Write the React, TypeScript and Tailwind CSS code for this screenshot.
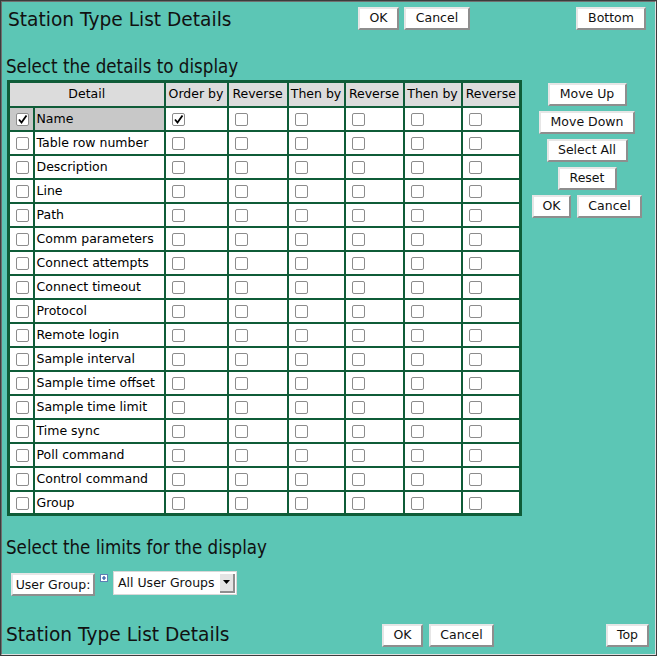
import React from "react";

const details = [
  "Name",
  "Table row number",
  "Description",
  "Line",
  "Path",
  "Comm parameters",
  "Connect attempts",
  "Connect timeout",
  "Protocol",
  "Remote login",
  "Sample interval",
  "Sample time offset",
  "Sample time limit",
  "Time sync",
  "Poll command",
  "Control command",
  "Group",
];

const sortHeads = ["Order by", "Reverse", "Then by", "Reverse", "Then by", "Reverse"];

const Box = ({ checked }: { checked?: boolean }) => (
  <span className="flex items-center justify-center w-[13px] h-[13px] bg-white border border-[#8c8c8c] rounded-[2px]">
    {checked && (
      <svg width="11" height="11" viewBox="0 0 11 11">
        <path d="M2 5.5 L4.5 8.5 L9.5 1.5" fill="none" stroke="#000" strokeWidth="1.8" />
      </svg>
    )}
  </span>
);

const Btn = ({ label, className }: { label: string; className: string }) => (
  <button
    className={
      "flex items-center justify-center h-[23px] bg-white text-[12.5px] text-[#111] border-2 border-t-[#e6e6e6] border-l-[#e6e6e6] border-r-[#8e8e8e] border-b-[#8e8e8e] " +
      className
    }
  >
    {label}
  </button>
);

const cell = "border-2 border-[#0f5c38] p-0 h-[24px]";

export default function App() {
  return (
    <div className="w-[657px] h-[656px] border border-[#3c3c3c] font-['DejaVu_Sans',sans-serif] text-[#111]">
      <div className="h-full bg-[#5cc6b5] border border-t-[#707070] border-l-[#707070] border-r-[#e0e0e0] border-b-[#e0e0e0]">
        {/* Top bar */}
        <div className="flex items-start pt-[5px] h-[29px]">
          <div className="w-[356px] pl-[6px]">
            <h1 className="mt-[2px] text-[18.6px] leading-[22px]">Station Type List Details</h1>
          </div>
          <Btn label="OK" className="w-[41px]" />
          <Btn label="Cancel" className="w-[66px] ml-[5px]" />
          <Btn label="Bottom" className="w-[70px] ml-auto mr-[9px]" />
        </div>

        <h2 className="mt-[25px] pl-[4px] text-[18.6px] leading-[22px] font-['DejaVu_Sans_Condensed','DejaVu_Sans',sans-serif] font-stretch-condensed">
          Select the details to display
        </h2>

        <div className="flex items-start mt-[2px]">
          <table className="ml-[5px] w-[515px] table-fixed border-collapse border-[3px] border-[#0f5c38] text-[12.5px] text-black">
            <colgroup>
              <col className="w-[25px]" />
              <col className="w-[131px]" />
              <col className="w-[63px]" />
              <col className="w-[60px]" />
              <col className="w-[57px]" />
              <col className="w-[59px]" />
              <col className="w-[58px]" />
              <col className="w-[59px]" />
            </colgroup>
            <thead>
              <tr>
                <th colSpan={2} className={cell + " h-[25px] pt-[1px] bg-[#dcdcdc] font-normal text-center"}>
                  Detail
                </th>
                {sortHeads.map((h, i) => (
                  <th key={i} className={cell + " h-[25px] pt-[1px] bg-[#dcdcdc] font-normal text-center whitespace-nowrap"}>
                    {h}
                  </th>
                ))}
              </tr>
            </thead>
            <tbody>
              {details.map((d, r) => (
                <tr key={d}>
                  <td className={cell + " pt-[2px]" + (r === 0 ? " bg-[#c8c8c8]" : " bg-white")}>
                    <div className="flex pl-[6px]">
                      <Box checked={r === 0} />
                    </div>
                  </td>
                  <td className={cell + " pl-[2px] pt-[2px] whitespace-nowrap" + (r === 0 ? " bg-[#c8c8c8]" : " bg-white")}>{d}</td>
                  {sortHeads.map((_, c) => (
                    <td key={c} className={cell + " pt-[2px] bg-white"}>
                      <div className="flex pl-[6px]">
                        <Box checked={r === 0 && c === 0} />
                      </div>
                    </td>
                  ))}
                </tr>
              ))}
            </tbody>
          </table>

          <div className="w-[130px] mt-[3px] flex flex-col items-center gap-[5px]">
            <Btn label="Move Up" className="w-[79px]" />
            <Btn label="Move Down" className="w-[96px]" />
            <Btn label="Select All" className="w-[81px]" />
            <Btn label="Reset" className="w-[59px]" />
            <div className="flex gap-[6px]">
              <Btn label="OK" className="w-[39px]" />
              <Btn label="Cancel" className="w-[65px]" />
            </div>
          </div>
        </div>

        <h2 className="mt-[21px] pl-[4px] text-[18.6px] leading-[22px] font-['DejaVu_Sans_Condensed','DejaVu_Sans',sans-serif] font-stretch-condensed">
          Select the limits for the display
        </h2>

        <div className="flex items-start mt-[12px] ml-[9px] text-[12.5px]">
          <span className="mt-[2px] flex items-center h-[23px] w-[84px] justify-center pt-[1px] bg-white border-2 border-t-[#e6e6e6] border-l-[#e6e6e6] border-r-[#8e8e8e] border-b-[#8e8e8e]">
            User Group:
          </span>
          <svg className="mt-[3px] ml-[5px]" width="8" height="8" viewBox="0 0 8 8">
            <rect x="0.5" y="0.5" width="7" height="7" fill="#ffffff" stroke="#5d7fb5" />
            <path d="M2 4 H6 M4 2 V6" stroke="#1f4fa0" strokeWidth="1.2" />
          </svg>
          <div className="ml-[5px] flex items-center justify-between w-[124px] h-[24px] bg-white border border-[#d8d8d8] pl-[4px] pr-[1px]">
            <span>All User Groups</span>
            <span className="flex items-center justify-center w-[15px] h-[19px] bg-[#e4e4e4] border-r-2 border-b-2 border-[#8e8e8e]">
              <svg width="7" height="4" viewBox="0 0 7 4">
                <path d="M0 0 H7 L3.5 4 Z" fill="#000" />
              </svg>
            </span>
          </div>
        </div>

        {/* Bottom bar */}
        <div className="flex items-start mt-[28px]">
          <div className="w-[380px] pl-[4px]">
            <h1 className="text-[18.6px] leading-[22px]">Station Type List Details</h1>
          </div>
          <Btn label="OK" className="w-[41px]" />
          <Btn label="Cancel" className="w-[65px] ml-[6px]" />
          <Btn label="Top" className="w-[43px] ml-auto mr-[6px]" />
        </div>
      </div>
    </div>
  );
}
